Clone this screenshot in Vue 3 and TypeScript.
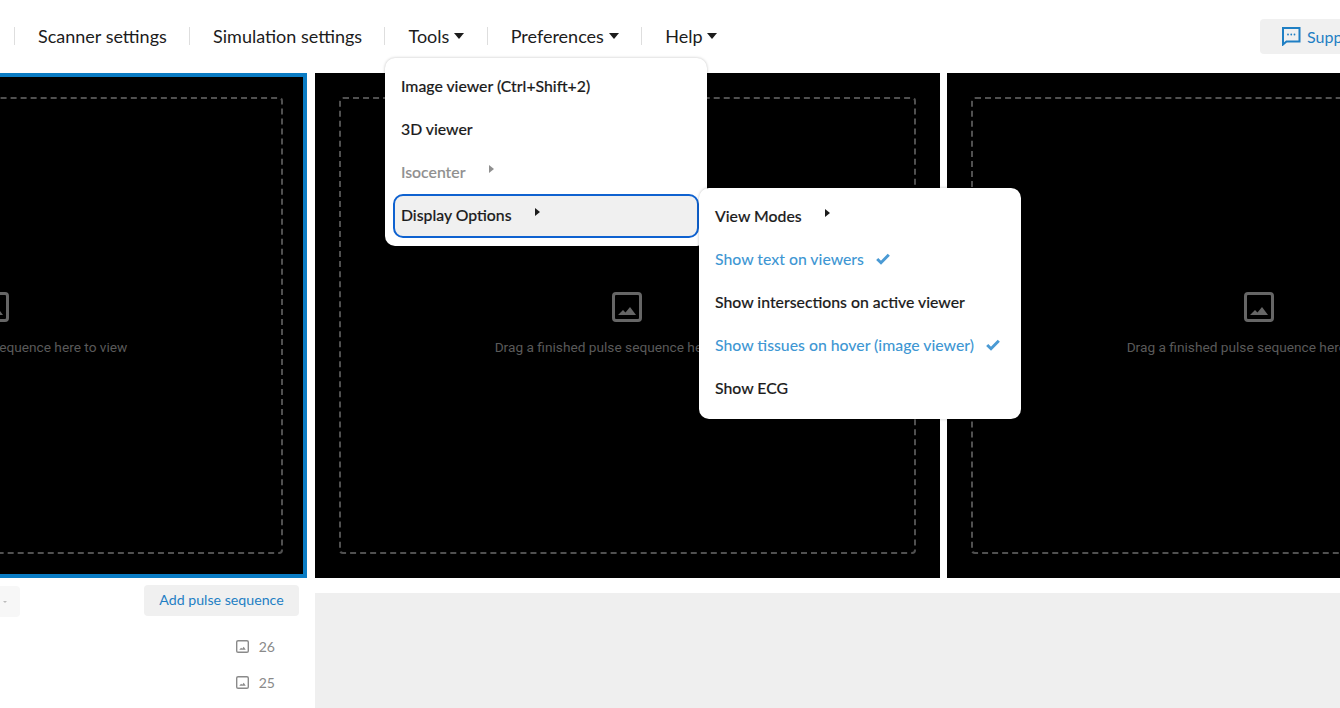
<script setup lang="ts">
interface NavItem { label: string; caret: boolean }
interface SubItem { label: string; active?: boolean; arrow?: boolean }

const navItems: NavItem[] = [
  { label: 'Scanner settings', caret: false },
  { label: 'Simulation settings', caret: false },
  { label: 'Tools', caret: true },
  { label: 'Preferences', caret: true },
  { label: 'Help', caret: true },
]
const subItems: SubItem[] = [
  { label: 'View Modes', arrow: true },
  { label: 'Show text on viewers', active: true },
  { label: 'Show intersections on active viewer' },
  { label: 'Show tissues on hover (image viewer)', active: true },
  { label: 'Show ECG' },
]
const viewers = [0, 1, 2]
const counts = ['26', '25']
</script>

<template>
  <div class="page">
    <header class="topbar">
      <nav class="nav">
        <div v-for="item in navItems" :key="item.label" class="nav-item">
          <span class="nav-label">{{ item.label }}</span>
          <i v-if="item.caret" class="caret-down"></i>
        </div>
      </nav>
      <button class="support">
        <svg class="support-icon" viewBox="0 0 20 20" width="20" height="20">
          <path d="M2 2h16.500v13.500H5.500L2 18.500z" fill="none" stroke="#1f7fc4" stroke-width="2" stroke-linejoin="miter" />
          <circle cx="7" cy="8.500" r="0.900" fill="#1f7fc4" />
          <circle cx="10.250" cy="8.500" r="0.900" fill="#1f7fc4" />
          <circle cx="13.500" cy="8.500" r="0.900" fill="#1f7fc4" />
        </svg>
        <span>Support</span>
      </button>
    </header>

    <section class="viewers">
      <div v-for="v in viewers" :key="v" class="viewer" :class="{ selected: v === 0 }">
        <div class="dashed">
          <svg class="img-icon" viewBox="0 0 30 30" width="30" height="30">
            <rect x="1.500" y="1.500" width="27" height="27" rx="2.500" fill="none" stroke="#666" stroke-width="3" />
            <path d="M6 23l5-5 2.500 2.500L18 15l6 8z" fill="#666" />
          </svg>
          <p class="hint">Drag a finished pulse sequence here to view</p>
        </div>
      </div>
    </section>

    <section class="lower">
      <aside class="side">
        <div class="side-actions">
          <div class="select-stub"><i class="stub-caret"></i></div>
          <button class="add">Add pulse sequence</button>
        </div>
        <div v-for="c in counts" :key="c" class="count">
          <svg viewBox="0 0 14 14" width="13" height="13">
            <rect x="0.750" y="0.750" width="12.500" height="12.500" rx="1.500" fill="none" stroke="#8a8a8a" stroke-width="1.500" />
            <path d="M3.500 10.500l2-2.200 1.200 1 1.600-2 2.200 3.200z" fill="#8a8a8a" />
          </svg>
          <span>{{ c }}</span>
        </div>
      </aside>
      <div class="panel"></div>
    </section>

    <div class="menu tools-menu">
      <div class="row"><span>Image viewer (Ctrl+Shift+2)</span></div>
      <div class="row"><span>3D viewer</span></div>
      <div class="row disabled"><span>Isocenter</span><i class="caret-right"></i></div>
      <div class="row focused"><span>Display Options</span><i class="caret-right"></i></div>
    </div>

    <div class="menu sub-menu">
      <div v-for="s in subItems" :key="s.label" class="row" :class="{ active: s.active }">
        <span>{{ s.label }}</span>
        <i v-if="s.arrow" class="caret-right"></i>
        <svg v-if="s.active" class="check" viewBox="0 0 14 12" width="14" height="12">
          <path d="M1.200 6l3.800 3.700L12.800 1.800" fill="none" stroke="#4a9ad4" stroke-width="3" />
        </svg>
      </div>
    </div>
  </div>
</template>

<style scoped>
.page {
  position: relative;
  width: 1340px;
  height: 708px;
  overflow: hidden;
  background: #fff;
  font-family: Lato, "Open Sans", sans-serif;
  color: #1c1c1c;
}
.topbar {
  height: 73px;
  display: flex;
  align-items: center;
}
.nav {
  display: flex;
  align-items: center;
  margin-left: 14px;
  margin-top: -1px;
}
.nav-item {
  display: flex;
  align-items: center;
  height: 18px;
  padding: 0 22.300px 0 23px;
  border-left: 1px solid #dedede;
  font-size: 18px;
  white-space: nowrap;
}
.nav-label { margin-top: -1px; }
.caret-down {
  width: 0;
  height: 0;
  margin-left: 5px;
  border-left: 5px solid transparent;
  border-right: 5px solid transparent;
  border-top: 6px solid #1c1c1c;
}
.support {
  flex-shrink: 0;
  display: flex;
  align-items: center;
  gap: 6px;
  width: 140px;
  height: 35px;
  margin-left: auto;
  margin-right: -60px;
  padding: 0 0 1px 21px;
  border: 0;
  border-radius: 4px;
  background: #f0f0f0;
  color: #1f7fc4;
  font: 400 16px Lato, sans-serif;
}
.support-icon { flex-shrink: 0; }
.viewers {
  display: flex;
  gap: 7px;
  margin-left: -318px;
}
.viewer {
  flex: 0 0 625px;
  box-sizing: border-box;
  height: 505px;
  padding: 24px;
  background: #000;
}
.viewer.selected {
  margin-right: 1px;
  padding: 20px;
  border: 4px solid #0a7cc4;
}
.dashed {
  box-sizing: border-box;
  height: 100%;
  display: flex;
  flex-direction: column;
  align-items: center;
  padding-top: 193px;
  border: 2px dashed #505050;
  border-radius: 4px;
}
.img-icon { display: block; margin-left: -1px; }
.hint {
  margin: 16px 0 0;
  color: #5a5a5a;
  font: 400 13.700px/18px Roboto, sans-serif;
  white-space: nowrap;
}
.lower {
  display: flex;
  height: 130px;
}
.side {
  flex: 0 0 315px;
  box-sizing: border-box;
  padding: 7px 16px 0 0;
}
.side-actions {
  display: flex;
  justify-content: space-between;
  margin-bottom: 12px;
}
.select-stub {
  display: flex;
  align-items: center;
  width: 20px;
  height: 31px;
  margin-top: 1px;
  border-radius: 0 4px 4px 0;
  background: #f7f7f7;
}
.stub-caret {
  margin-left: 3px;
  border-left: 2px solid transparent;
  border-right: 2px solid transparent;
  border-top: 2px solid #bbb;
}
.add {
  width: 155px;
  height: 31px;
  padding: 0 0 3px;
  border: 0;
  border-radius: 4px;
  background: #f0f0f0;
  color: #1f7fc4;
  font: 400 14.200px Lato, sans-serif;
}
.count {
  display: flex;
  align-items: center;
  justify-content: flex-end;
  gap: 10px;
  height: 35.500px;
  padding-right: 24px;
  color: #8a8a8a;
  font-size: 14px;
}
.panel {
  flex: 1;
  margin-top: 15px;
  background: #efefef;
}
.menu {
  position: absolute;
  width: 322px;
  box-sizing: border-box;
  border-radius: 10px;
  background: #fff;
  box-shadow: 0 0 3px rgba(0, 0, 0, 0.25);
}
.tools-menu {
  left: 385px;
  top: 58px;
  height: 188px;
  padding: 7px 8px 8px;
}
.sub-menu {
  left: 699px;
  top: 188px;
  height: 231px;
  padding: 7px 16px 9px;
}
.row {
  display: flex;
  align-items: center;
  height: 43px;
  box-sizing: border-box;
  padding-bottom: 2px;
  font-size: 15.800px;
  font-weight: 500;
  color: #1c1c1c;
  white-space: nowrap;
  -webkit-text-stroke: 0.15px currentColor;
}
.tools-menu .row { padding-left: 8px; padding-right: 8px; }
.row.disabled { color: #8f8f8f; }
.row.disabled .caret-right { margin-left: 24px; }
.row.active { color: #3f97d3; -webkit-text-stroke: 0; }
.tools-menu .row.focused {
  height: 44px;
  padding: 0 6px 3px;
  border: 2px solid #0f62d0;
  border-radius: 10px;
  background: #f0f0f0;
}
.caret-right {
  width: 0;
  height: 0;
  margin: -6px 0 0 23px;
  border-top: 4px solid transparent;
  border-bottom: 4px solid transparent;
  border-left: 5px solid currentColor;
}
.check { flex-shrink: 0; margin-left: 12px; }
</style>
